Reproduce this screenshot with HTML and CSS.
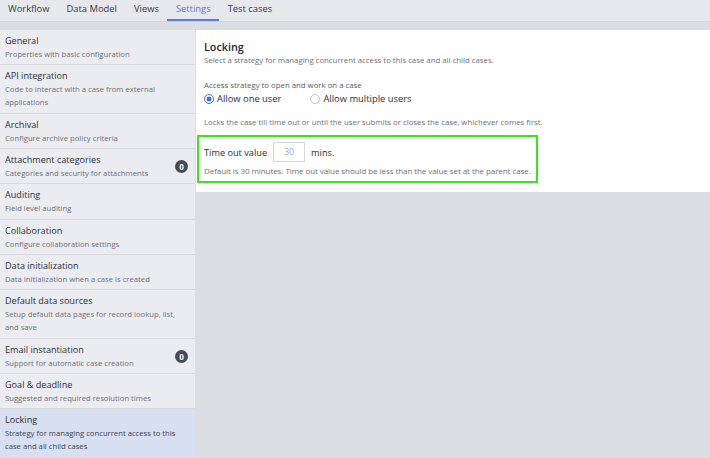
FILE: index.html
```html
<!DOCTYPE html>
<html>
<head>
<meta charset="utf-8">
<link rel="stylesheet" href="styles.css">
</head>
<body>
<div class="tabs">
  <div class="tab">Workflow</div>
  <div class="tab">Data Model</div>
  <div class="tab">Views</div>
  <div class="tab active">Settings</div>
  <div class="tab">Test cases</div>
</div>
<div class="main">
  <nav class="side">
    <div class="item"><div class="t">General</div><div class="d">Properties with basic configuration</div></div>
    <div class="item"><div class="t">API integration</div><div class="d">Code to interact with a case from external applications</div></div>
    <div class="item"><div class="t">Archival</div><div class="d">Configure archive policy criteria</div></div>
    <div class="item badged"><div class="txt"><div class="t">Attachment categories</div><div class="d">Categories and security for attachments</div></div><span class="badge">0</span></div>
    <div class="item"><div class="t">Auditing</div><div class="d">Field level auditing</div></div>
    <div class="item"><div class="t">Collaboration</div><div class="d">Configure collaboration settings</div></div>
    <div class="item"><div class="t">Data initialization</div><div class="d">Data initialization when a case is created</div></div>
    <div class="item"><div class="t">Default data sources</div><div class="d">Setup default data pages for record lookup, list, and save</div></div>
    <div class="item badged"><div class="txt"><div class="t">Email instantiation</div><div class="d">Support for automatic case creation</div></div><span class="badge">0</span></div>
    <div class="item"><div class="t">Goal &amp; deadline</div><div class="d">Suggested and required resolution times</div></div>
    <div class="item sel"><div class="t">Locking</div><div class="d dark">Strategy for managing concurrent access to this case and all child cases</div></div>
  </nav>
  <section class="panel">
    <h2 class="h">Locking</h2>
    <p class="sub">Select a strategy for managing concurrent access to this case and all child cases.</p>
    <div class="lbl">Access strategy to open and work on a case</div>
    <div class="radios">
      <label class="radio"><span class="dot on"></span>Allow one user</label>
      <label class="radio"><span class="dot"></span>Allow multiple users</label>
    </div>
    <p class="note">Locks the case till time out or until the user submits or closes the case, whichever comes first.</p>
    <div class="box">
      <div class="row"><span class="rl">Time out value</span><span class="inp">30</span><span class="rl">mins.</span></div>
      <div class="help">Default is 30 minutes. Time out value should be less than the value set at the parent case.</div>
    </div>
  </section>
</div>
</body>
</html>
```
FILE: styles.css
```css
* { box-sizing: border-box; }
html, body { margin: 0; padding: 0; }
body {
  width: 710px; height: 458px; overflow: hidden;
  background: #dcdde2;
  font-family: "Open Sans", "Noto Sans", sans-serif;
  color: #2b2f38;
}
.tabs {
  display: flex; height: 22px; background: #e7e8ec;
  border-bottom: 1px solid #d0d2d8; margin-left: -0.5px;
}
.tab {
  font-size: 9.4px; line-height: 18px; padding: 0 8.5px; color: #333844;
  border-bottom: 2px solid transparent; height: 21px;
}
.tab.active { color: #5d79e2; border-bottom-color: #5d79e2; }
.main { display: flex; align-items: flex-start; margin-top: 8px; }
.side { width: 195px; flex: none; }
.item {
  background: #ebecf0; border-bottom: 1px solid #d8d9de;
  padding: 4px 5px 3.35px 5px;
}
.item.sel { background: #d8dff0; border-bottom: none; padding-bottom: 6px; }
.badged { display: flex; align-items: center; }
.badged .txt { flex: 1; }
.t { font-size: 9.1px; line-height: 14px; color: #2b2f38; }
.d { font-size: 7.7px; line-height: 13px; color: #6d717a; padding-right: 14px; }
.d.dark { color: #3e434d; }
.badge {
  width: 13px; height: 13px; border-radius: 50%; background: #444a57; color: #fff;
  font-size: 8px; line-height: 13px; text-align: center; font-weight: 700; margin-right: 2px;
}
.panel {
  flex: 1; background: #fff; margin-left: 1px; height: 162px;
  padding: 9px 9px 0 8px;
}
.h { margin: 0; font-size: 10.8px; font-weight: 600; line-height: 16px; color: #22262e; }
.sub { margin: 0; font-size: 7.8px; line-height: 11px; color: #6d717a; }
.lbl { margin-top: 14px; font-size: 7.8px; line-height: 11px; color: #555a63; }
.radios { display: flex; gap: 29px; margin-top: 1px; }
.radio { display: flex; align-items: center; font-size: 9.4px; line-height: 13px; color: #2b2f38; }
.dot {
  width: 10px; height: 10px; border-radius: 50%; border: 1px solid #c3c6cc; margin-right: 3px; background: #fff;
}
.dot.on { border-color: #3d6fdc; background: radial-gradient(circle, #3d6fdc 0 2.2px, #fff 2.7px); }
.note { margin: 12px 0 0; font-size: 7.8px; line-height: 11px; color: #6d717a; }
.box {
  margin: 7px 0 0 -7px; width: 341px; border: 2.5px solid #39e619;
  padding: 5px 4px 4px 5px;
}
.row { display: flex; align-items: center; gap: 6px; }
.rl { font-size: 9.2px; color: #2b2f38; }
.inp {
  width: 32px; height: 20px; border: 1px solid #d6d8dd; text-align: center;
  font-size: 9px; line-height: 18px; color: #a8abb2;
}
.help { font-size: 8px; letter-spacing: -0.07px; line-height: 12px; color: #6d717a; margin-top: 3px; white-space: nowrap; }
```
